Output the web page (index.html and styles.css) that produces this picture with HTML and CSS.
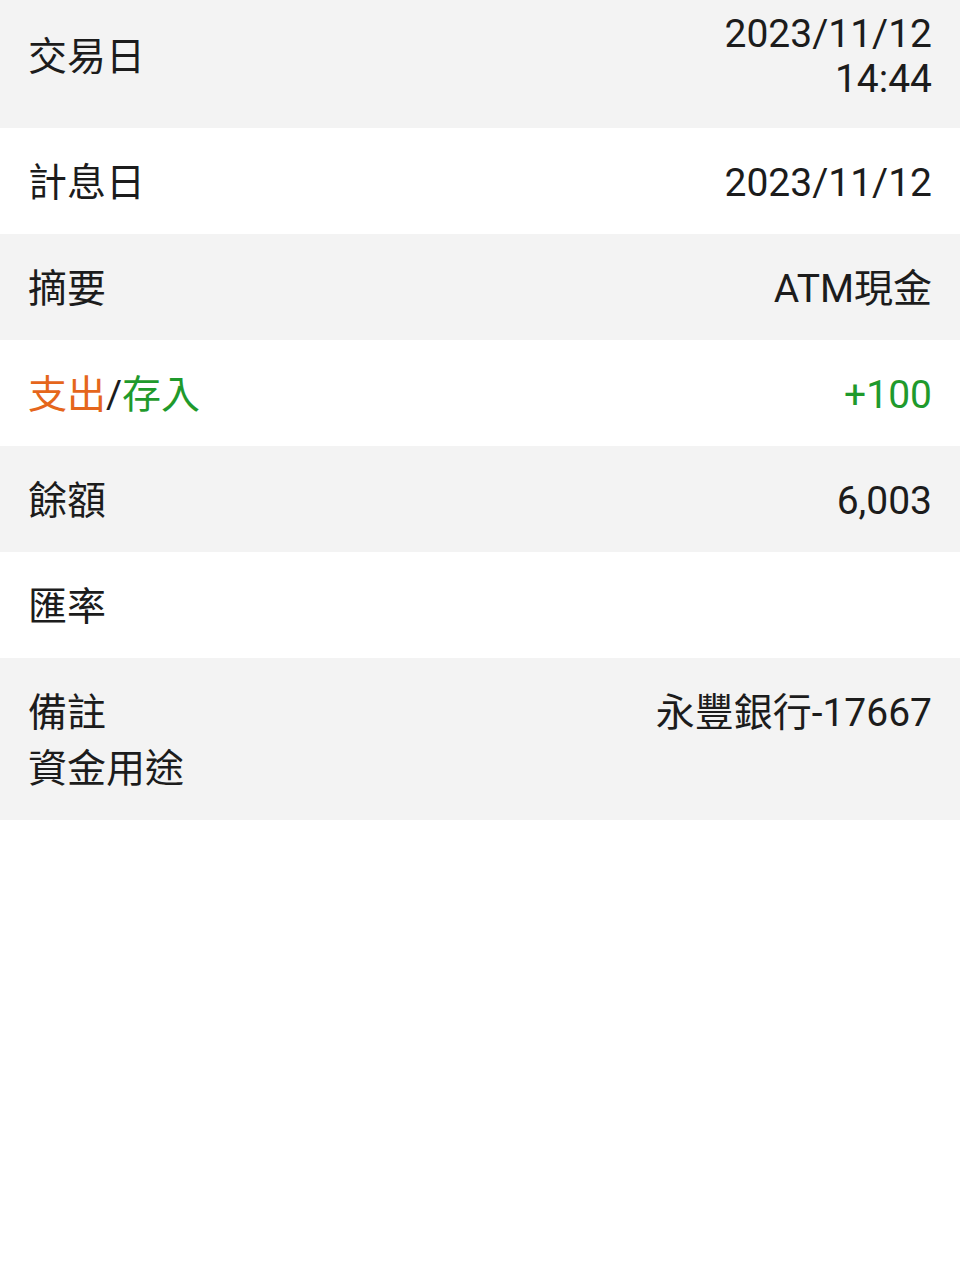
FILE: index.html
```html
<!DOCTYPE html>
<html>
<head>
  <title>交易明細</title>
  <link rel="stylesheet" href="styles.css">
</head>
<body>
  <div class="detail">
    <div class="row gray">
      <div class="label">交易日</div>
      <div class="value stacked">
        <span>2023/11/12</span>
        <span>14:44</span>
      </div>
    </div>

    <div class="row">
      <div class="label">計息日</div>
      <div class="value">2023/11/12</div>
    </div>

    <div class="row gray">
      <div class="label">摘要</div>
      <div class="value">ATM現金</div>
    </div>

    <div class="row">
      <div class="label"><span class="out">支出</span>/<span class="in">存入</span></div>
      <div class="value in">+100</div>
    </div>

    <div class="row gray">
      <div class="label">餘額</div>
      <div class="value">6,003</div>
    </div>

    <div class="row">
      <div class="label">匯率</div>
      <div class="value"></div>
    </div>

    <div class="row gray top">
      <div class="label">
        <div>備註</div>
        <div class="sub">資金用途</div>
      </div>
      <div class="value">永豐銀行-17667</div>
    </div>
  </div>
</body>
</html>
```

FILE: styles.css
```css
body {
  margin: 0;
  background: #fff;
  font-family: Roboto, "Noto Sans CJK TC", sans-serif;
  font-size: 39px;
  color: #1c1c1c;
}

.detail {
  margin-top: -18px;
}

.row {
  display: flex;
  justify-content: space-between;
  align-items: center;
  padding: 30px 28px 26px;
  line-height: 50px;
}

.row.gray {
  background: #f3f3f3;
}

.row.top {
  align-items: flex-start;
}

.label {
  white-space: nowrap;
}

.label .sub {
  margin-top: 6px;
}

.value {
  text-align: right;
}

.value.stacked {
  display: flex;
  flex-direction: column;
  line-height: 45px;
}

.out {
  color: #e5661c;
}

.in {
  color: #1f9a2c;
}
```
